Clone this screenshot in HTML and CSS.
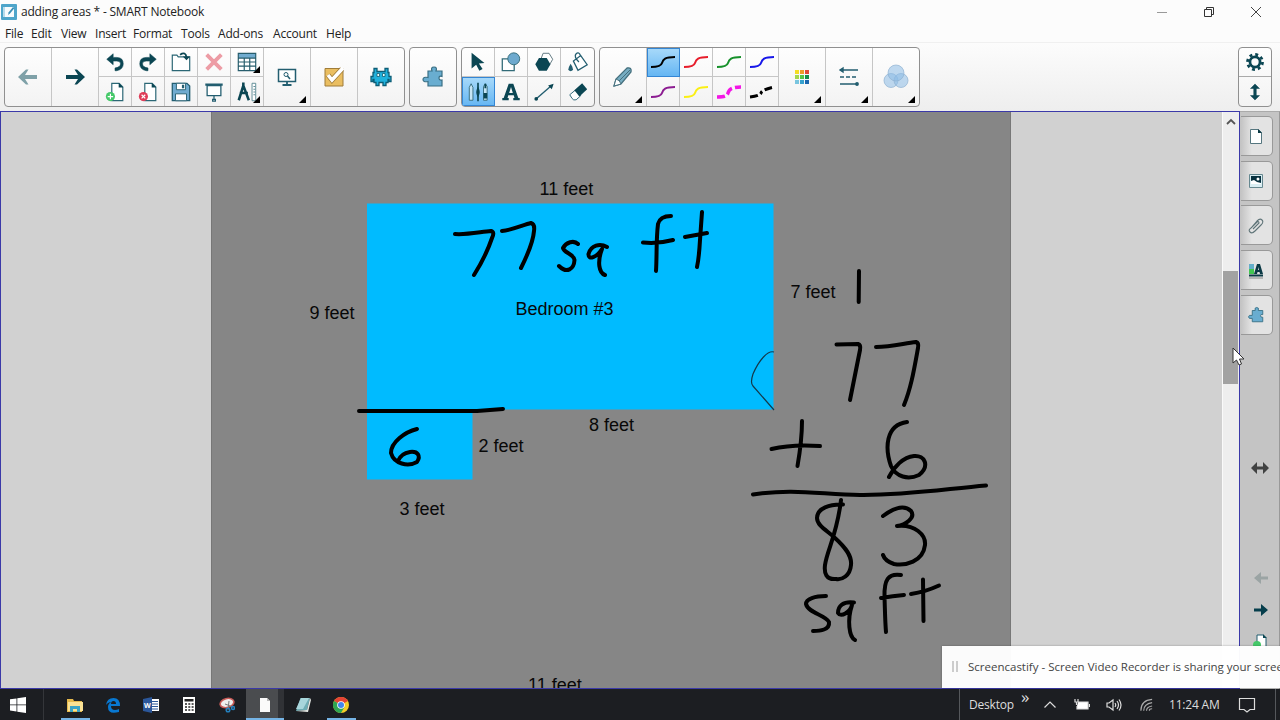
FILE: index.html
```html
<!DOCTYPE html>
<html lang="en">
<head>
<meta charset="utf-8">
<title>adding areas * - SMART Notebook</title>
<link rel="stylesheet" href="styles.css">
</head>
<body>
<div class="screen">
  <header class="titlebar">
    <svg class="app-icon" viewBox="0 0 16 16"><rect width="16" height="16" rx="1" fill="#4ea5ca"/><path d="M3 3h10v10H3z" fill="#f7fbfd"/><path d="M3 3v10" stroke="#b7dbea" stroke-width="2"/><path d="M7 11l.7-2.7L12 3l1.500 1-4.500 5.600z" fill="#3c8fb5"/></svg>
    <span class="title">adding areas * - SMART Notebook</span>
    <div class="window-controls">
      <svg viewBox="0 0 12 12"><path d="M1 6.500h10" stroke="#999"/></svg>
      <svg viewBox="0 0 12 12" fill="none" stroke="#333"><path d="M1.500 3.500h7v7h-7zM3.500 3.500v-2h7v7h-2"/></svg>
      <svg viewBox="0 0 12 12" stroke="#444"><path d="M1 1l10 10M11 1L1 11"/></svg>
    </div>
  </header>
  <nav class="menubar"><span>File</span><span>Edit</span><span>View</span><span>Insert</span><span>Format</span><span>Tools</span><span>Add-ons</span><span>Account</span><span>Help</span></nav>

  <div class="toolbar">
    <div class="group">
      <div class="cell big"><svg viewBox="0 0 24 24"><path d="M2 12l8-7.500h2.500L9 10.100h12v3.800H9l3.500 5.600H10z" fill="#7fa1a8"/></svg></div>
      <div class="cell big"><svg viewBox="0 0 24 24"><path d="M22 12l-8-7.500h-2.500l3.500 5.600H3v3.800h12l-3.500 5.600H14z" fill="#0b4653"/></svg></div>
      <div class="grid five">
        <div class="cell"><svg viewBox="0 0 24 24"><path d="M3 9l7-6v4h4q7 0 7 7 0 6-7 7.500h-2v-3q6-.8 6-4.500 0-3-4-3h-4v4z" fill="#0b4653" stroke="#0b4653" stroke-width=".6"/></svg></div>
        <div class="cell"><svg viewBox="0 0 24 24"><path d="M21 9l-7-6v4h-4q-7 0-7 7 0 6 7 7.500h2v-3q-6-.8-6-4.500 0-3 4-3h4v4z" fill="#0b4653" stroke="#0b4653" stroke-width=".6"/></svg></div>
        <div class="cell"><svg viewBox="0 0 24 24" fill="none" stroke="#2b6775"><path d="M2.500 4.500h5l1.500 2h12.500v15h-19z" fill="#fff" stroke-width="1.300"/><path d="M11 4q6-4 7 3" stroke="#0b4653" stroke-width="2"/><path d="M14 6h8l-4 4z" fill="#0b4653" stroke="none"/></svg></div>
        <div class="cell"><svg viewBox="0 0 24 24"><path d="M4 4l16 16M20 4L4 20" stroke="#ed9ca5" stroke-width="4.200"/></svg></div>
        <div class="cell corner"><svg viewBox="0 0 24 24"><path d="M2.500 2.500h19v19h-19z" fill="#fff"/><path d="M2.500 2.500h19v5h-19z" fill="#71acd0"/><path d="M2.500 2.500h19v19h-19zM2 7.800h20M2 12h20M2 16.500h20M9 8v13.500M15 8v13.500" fill="none" stroke="#285e6d" stroke-width="1.300"/></svg></div>
        <div class="cell"><svg viewBox="0 0 24 24"><path d="M8.500 2.500h8l4 4v15h-12z" fill="#fff" stroke="#2b6775" stroke-width="1.300"/><path d="M16 2v5h5z" fill="#0b4653"/><circle cx="7" cy="17" r="5" fill="#45c969"/><path d="M4 17h6M7 14v6" stroke="#fff" stroke-width="1.300"/></svg></div>
        <div class="cell"><svg viewBox="0 0 24 24"><path d="M8.500 2.500h8l4 4v15h-12z" fill="#fff" stroke="#2b6775" stroke-width="1.300"/><path d="M16 2v5h5z" fill="#0b4653"/><circle cx="7" cy="17" r="5" fill="#df3d58"/><path d="M5 15l4 4M9 15l-4 4" stroke="#fff" stroke-width="1.300"/></svg></div>
        <div class="cell"><svg viewBox="0 0 24 24"><path d="M2.500 2.500h16l3 3v16h-19z" fill="#71acd0" stroke="#235e70" stroke-width="1.400"/><path d="M7 2.500h10v7H7zM6 14h12v7.500H6z" fill="#fff" stroke="#235e70"/><path d="M13 4h2.500v4H13z" fill="#235e70"/></svg></div>
        <div class="cell"><svg viewBox="0 0 24 24" stroke="#235e70" fill="#fff" stroke-width="1.400"><path d="M4.500 5h15v11h-15zM12 16v5"/><path d="M2.500 4h19" stroke-width="2.500"/><path d="M10.500 20h3v2h-3z"/></svg></div>
        <div class="cell corner"><svg viewBox="0 0 24 24"><path d="M8 1.500v4M8 5L3 21M8 5l6 16M4 13h9" fill="none" stroke="#0b4653" stroke-width="2.800"/><path d="M17.500 2.500h4v19h-4zM19 6h2M19 9h2M19 12h2M19 15h2" fill="#fff" stroke="#588791"/></svg></div>
      </div>
      <div class="cell big corner"><svg viewBox="0 0 24 24"><path d="M3.500 4.500h17v12h-17z" fill="#fff" stroke="#235e70" stroke-width="1.500"/><path d="M12 16v4M7.500 20h9" stroke="#235e70" stroke-width="1.800"/><circle cx="11" cy="9.500" r="2" fill="none" stroke="#235e70"/><path d="M12.500 11l2.500 3" stroke="#235e70" stroke-width="1.500"/></svg></div>
      <div class="cell big"><svg viewBox="0 0 24 24"><path d="M3 3.500h18V21H3z" fill="#eabe61" stroke="#a07d3a"/><path d="M6 10l4 5L20 4" fill="none" stroke="#a07d3a" stroke-width="5.200"/><path d="M6 10l4 5L21 3" fill="none" stroke="#fff" stroke-width="3.600"/></svg></div>
      <div class="cell big"><svg viewBox="0 0 24 24"><path d="M5 3.500h3v3h8v-3h3v4h1v4h2v5h-2v-2h-1v3h-2v3h-3v-3h-4v3H7v-3H5v-3H4v2H2v-5h2v-4h1z" fill="#20b1dc" stroke="#0d5d76" stroke-width="1.300"/><path d="M8 8.500h2.500v3H8zM13.500 8.500H16v3h-2.500z" fill="#e8ffff" stroke="#175c70" stroke-width=".8"/></svg></div>
    </div>
    <div class="group"><div class="cell big"><svg viewBox="0 0 24 24"><path class="puzzle" d="M7 6h4q-1.500-4 2-4t2 4H21v5.500q-3-1-3 1.500t3 2V21H7v-4.500q-5 1-5-2t5-2z"/></svg></div></div>
    <div class="group">
      <div class="grid four">
        <div class="cell"><svg viewBox="0 0 24 24"><path d="M5 2l14 11-6 .5 4 6-3.500 2-3.500-6.500-5 4z" fill="#0b4653"/></svg></div>
        <div class="cell"><svg viewBox="0 0 24 24" stroke="#326b78"><path d="M2.500 8.500h13v13h-13z" fill="#fff" stroke-width="1.400"/><circle cx="15" cy="8.500" r="6.500" fill="#6da9ce"/></svg></div>
        <div class="cell"><svg viewBox="0 0 24 24"><path d="M11 2.500h6.500l4 6.500-4 7-10-4z" fill="#fff" stroke="#58717a"/><path d="M6.500 7.500h8.500l4 7-4 7H6.500l-4-7z" fill="#0b4653"/></svg></div>
        <div class="cell"><svg viewBox="0 0 24 24"><path d="M7 11l8-6 7 10-10 6zM15 6q-2-6-5-3t3 9" fill="#fff" stroke="#235e70" stroke-width="1.400"/><path d="M4 14q-5 8 0 8t0-8" fill="#235e70"/></svg></div>
        <div class="cell selected"><svg viewBox="0 0 24 24"><path d="M2.500 7l2-4 2 4v14h-4zM18 6l2-3 2 3v15h-4z" fill="#c6e5f5" stroke="#35697a"/><path d="M12 2v20" stroke="#0b4653" stroke-width="1.800"/><path d="M12 6c-3 6-2 8 0 12 2-4 3-6 0-12zM18 13h4v6h-4zM19 3h2v5h-2z" fill="#0b4653"/></svg></div>
        <div class="cell"><svg viewBox="0 0 24 24"><path d="M2.500 21v-2.500H4L9.500 3h5L20 18.500h1.500V21h-7v-2.500h1.300l-.8-3H9l-.8 3h1.300V21zM10 13h4l-2-6.500z" fill="#0b4653" fill-rule="evenodd"/></svg></div>
        <div class="cell"><svg viewBox="0 0 24 24"><path d="M3 20L19 6" stroke="#235e70" stroke-width="1.500"/><path d="M22.500 3l-2 6-4-4z" fill="#0b4653"/><circle cx="3.500" cy="19.500" r="2" fill="#0b4653"/></svg></div>
        <div class="cell"><svg viewBox="0 0 24 24"><path d="M3 15l6-5 6 6-5 4.500q-3 1-4.500-1.500z" fill="#fff" stroke="#235e70"/><path d="M8 10l8.500-7.500L22 9l-8.500 8z" fill="#0b4653"/></svg></div>
      </div>
    </div>
    <div class="group">
      <div class="cell big corner"><svg viewBox="0 0 24 24"><path d="M3 21l2-7L16 3q5-1 4 4L10 19z" fill="#77adc2" stroke="#45707e" stroke-width="1.300"/><path d="M3 21l2-7q4 1 5 5z" fill="#fff" stroke="#45707e"/><path d="M8 16L19 5" stroke="#466f7d"/></svg></div>
      <div class="grid four pens">
        <div class="cell selected"><svg viewBox="0 0 26 14"><path stroke="#000" d="M1 12c6 0 10-.5 11-4s3-6 13-6"/></svg></div>
        <div class="cell"><svg viewBox="0 0 26 14"><path stroke="#e71d2b" d="M1 12c6 0 10-.5 11-4s3-6 13-6"/></svg></div>
        <div class="cell"><svg viewBox="0 0 26 14"><path stroke="#17912b" d="M1 12c6 0 10-.5 11-4s3-6 13-6"/></svg></div>
        <div class="cell"><svg viewBox="0 0 26 14"><path stroke="#1717e9" d="M1 12c6 0 10-.5 11-4s3-6 13-6"/></svg></div>
        <div class="cell"><svg viewBox="0 0 26 14"><path stroke="#8c1c91" d="M1 12c6 0 10-.5 11-4s3-6 13-6"/></svg></div>
        <div class="cell"><svg viewBox="0 0 26 14"><path stroke="#faef14" d="M1 12c6 0 10-.5 11-4s3-6 13-6"/></svg></div>
        <div class="cell"><svg viewBox="0 0 26 14"><path stroke="#f316e5" class="dash" d="M1 12c6 0 10-.5 11-4s3-6 13-6"/></svg></div>
        <div class="cell"><svg viewBox="0 0 26 14"><path stroke="#000" class="dashdot" d="M1 12q10-1 11-4t11-5.500"/></svg></div>
      </div>
      <div class="cell big corner"><svg viewBox="0 0 24 24"><path d="M5 5h4v4H5z" fill="#f5dd24"/><path d="M10 5h4v4h-4z" fill="#ef9d28"/><path d="M15 5h4v4h-4z" fill="#df4b3a"/><path d="M5 10h4v4H5z" fill="#a4d84d"/><path d="M10 10h4v4h-4z" fill="#56c747"/><path d="M15 10h4v4h-4z" fill="#148c4b"/><path d="M5 15h4v4H5z" fill="#79c5df"/><path d="M10 15h4v4h-4z" fill="#36a1ce"/><path d="M15 15h4v4h-4z" fill="#1b66ae"/></svg></div>
      <div class="cell big corner"><svg viewBox="0 0 24 24" stroke="#235e70" stroke-width="1.400"><path d="M3 5h18M3 19h17"/><path d="M3 12h18" stroke-dasharray="4 2"/><path d="M6 3v4L3 5z" fill="#235e70"/><circle cx="20" cy="19" r="1.200" fill="#235e70"/></svg></div>
      <div class="cell big corner"><svg class="venn" viewBox="0 0 26 26" fill="#8dbbe6" fill-opacity=".55" stroke="#8fb1d1" stroke-width=".7"><circle cx="8" cy="16.500" r="7"/><circle cx="18" cy="16.500" r="7"/><circle cx="13" cy="9" r="8"/></svg></div>
    </div>
    <div class="group settings">
      <div class="cell"><svg viewBox="0 0 24 24"><g fill="none" stroke="#0b4653"><circle cx="12" cy="12" r="5.500" stroke-width="3"/><circle cx="12" cy="12" r="8.200" stroke-width="3" stroke-dasharray="3.200 3.240"/></g></svg></div>
      <div class="cell"><svg viewBox="0 0 24 24"><path d="M12 3l5.500 5.500h-3.800v7h3.800L12 21l-5.500-5.500h3.800v-7H6.500z" fill="#0b4653"/></svg></div>
    </div>
  </div>

  <main class="workspace">
    <div class="document">
      <svg class="page" viewBox="211 112 800 576">
        <path class="room" d="M367 203.500h406.500V409.500H472.500v70H367z"/>
        <g class="labels">
          <text x="539.500" y="194.500">11 feet</text><text x="309.500" y="318.500">9 feet</text>
          <text x="790.500" y="298">7 feet</text><text x="515.500" y="314.500">Bedroom #3</text>
          <text x="589" y="430.500">8 feet</text><text x="478.500" y="452">2 feet</text>
          <text x="399.500" y="514.500">3 feet</text><text x="528" y="690.500">11 feet</text>
        </g>
        <path class="door" d="M774 352C768 350 759 360 753 374Q750 383 753 386L774 410"/>
        <g class="ink">
          <path d="M455 234C466 235 480 232 491 231Q495 232 492 238Q486 256 474 275M502 231C512 230 523 225 531 223Q535 224 534 231C533 244 526 258 521 268"/>
          <path d="M578 244C574 240 566 242 563 248C564 253 574 254 574.500 260C574 269 567 274 559 266M607 247C600 243 591 245 588.500 254C588 261 597 257 602 249C597 262 599 273 605 275"/>
          <path d="M671 216Q660 216 658 224C656 240 657 255 656 271M643 242.500Q658 244 673 240M702 212L700 240Q699 258 697 267M685 237L707 233"/>
          <path d="M859 271L858.700 302M836.500 344.500L858 344Q861 345 860 350L850 400M876 347C892 347 905 343 916 342Q919 343 918 348C914 370 911 388 904 405M771.500 449Q792 444 820 446M802 421Q802 440 797.500 466"/>
          <path d="M907 422C885 425 885 449 891 466C896 477 908 480 919 475C930 466 925 455 914 456C903 457 894 467 889 477M753 494.500C795 488 824 495 860 495C905 495.500 945 489 986 485.500"/>
          <path d="M843 504.500C830 504 817 508 817 518C817 526 828 531 835 538C846 548 852 556 851 565C850 576 842 580 836 579C826 580 824 573 825 565C827 550 837 535 841 500M883 516C895 507 905 505 911 511C916 518 905 525 897 526C915 524 926 535 925 545C923 562 905 566 894 564C888 562 884 558 883 555"/>
          <path d="M826 596C815 596 806 599 806 604C808 613 826 615 829 622C830 630 820 631 813 631M854 602.500C843 601 838 606 838 613C841 618 850 612 852 605C847 620 849 637 855 640M901 575C888 573 884 580 884.500 597C885 610 885 620 886 632M881 598Q893 596 904 595M923 579.500L923.500 621M911 594Q925 592 939 585.500"/>
          <path d="M359 411L477 411L503 409M417 429C405 432 391 442 391 453C394 464 408 467 417 462C421 456 418 451 410 452C404 453 400 456 398 461"/>
        </g>
      </svg>
    </div>
    <div class="scrollbar"><svg viewBox="0 0 10 10"><path d="M1 7l4-4 4 4" fill="none" stroke="#555" stroke-width="1.800"/></svg><div class="thumb"></div></div>
    <aside class="sidebar">
      <div class="tabs">
        <div class="tab"><svg viewBox="0 0 18 18"><path d="M3.500 2.500h8l3 3v11h-11z" fill="#fff" stroke="#55767f"/><path d="M11 2v4h4z" fill="#0b3945"/></svg></div>
        <div class="tab"><svg viewBox="0 0 18 18"><path d="M2.500 2.500h13v13h-13z" fill="#d9edf2" stroke="#668890"/><path d="M4 4h10v8H4z" fill="#07313f"/><path d="M4 9l3-1 3 2 4 1v1H4z" fill="#fff"/><circle cx="11" cy="7" r="1.500" fill="#fff"/></svg></div>
        <div class="tab"><svg viewBox="0 0 18 18"><path d="M4 12l6-7q3-3 5-1t-1 5l-6 6q-3 3-5 1t1-4l6-6q2-1 2 1l-6 6" fill="none" stroke="#607579" stroke-width="1.100"/></svg></div>
        <div class="tab"><svg viewBox="0 0 18 18"><path d="M2 3h5v5H2z" fill="#64aeca"/><path d="M2 8h5v5H2z" fill="#43c652"/><path d="M7 13l3-10h3l3 10h-3l-.5-2h-2l-.5 2zM11 9h1l-.5-3z" fill="#0b3945" fill-rule="evenodd"/><path d="M2 14.500h14" stroke="#0b3945" stroke-width="2"/><path d="M2 17h14" stroke="#888"/></svg></div>
        <div class="tab"><svg viewBox="0 0 24 24"><path class="puzzle" d="M7 6h4q-1.500-4 2-4t2 4H21v5.500q-3-1-3 1.500t3 2V21H7v-4.500q-5 1-5-2t5-2z"/></svg></div>
      </div>
      <div class="resize"><svg viewBox="0 0 20 14"><path d="M1 7l6-6v4.500h6V1l6 6-6 6V8.500H7V13z" fill="#414242"/></svg></div>
      <div class="page-nav">
        <svg viewBox="0 0 16 16"><path d="M1 8l7-6v4.500h7v3H8V14z" fill="#9ba4a4"/></svg>
        <svg viewBox="0 0 16 16"><path d="M15 8L8 2v4.500H1v3h7V14z" fill="#063e4c"/></svg>
        <svg viewBox="0 0 16 16"><path d="M4 1h6l3 3v11H4z" fill="#fff" stroke="#235e70"/><path d="M10 0v4h4z" fill="#0b4653"/><circle cx="4" cy="11" r="4" fill="#45c969"/></svg>
      </div>
    </aside>
  </main>

  <footer class="taskbar">
    <div class="apps">
      <div class="start"><svg viewBox="0 0 16 16" fill="#fff"><path d="M0 2.300l6.500-.9v6.100H0zM7.300 1.300L16 0v7.500H7.300zM0 8.300h6.500v6.100L0 13.500zM7.300 8.300H16V16l-8.700-1.300z"/></svg></div>
      <div class="app running"><svg viewBox="0 0 16 16"><path d="M0 2h6l1 2h8v11H0z" fill="#e5b94d"/><path d="M1 5h15v9H1z" fill="#fbe294"/><path d="M3 9h10v6h-3v-3H6v3H3z" fill="#3ba4c5"/></svg></div>
      <div class="app"><svg viewBox="0 0 16 16"><path d="M1 8Q2 1 8.500 1 15 1 15 9H6q0 4 4 4 2 0 4-1v3q-11 3-11-5 0-4 4-5-4 0-6 3zM6 7h5q0-3-2.500-3T6 7z" fill="#0878d2" fill-rule="evenodd"/></svg></div>
      <div class="app"><svg viewBox="0 0 16 16"><path d="M8 2h8v12H8z" fill="#fff"/><path d="M9 4.500h6M9 7h6M9 9.500h6M9 12h6" stroke="#2b579a"/><path d="M0 2l9-2v16l-9-2z" fill="#2b579a"/><text x="1" y="11" class="word-letter">W</text></svg></div>
      <div class="app"><svg viewBox="0 0 16 16"><path d="M2 0h12v16H2z" fill="#fff"/><path d="M3.500 2h9v2.500h-9z" fill="#222"/><path d="M4 7h9M4 10h9M4 13h9" stroke="#222" stroke-width="1.700" stroke-dasharray="2 1.300"/></svg></div>
      <div class="app"><svg viewBox="0 0 16 16"><ellipse cx="8" cy="6" rx="7" ry="4.500" transform="rotate(-15 8 6)" fill="#eee" stroke="#c85b58" stroke-width="1.600"/><path d="M6 7l8 3M10 4l-1 9" stroke="#777"/><circle cx="9" cy="13" r="1.800" fill="none" stroke="#2480be" stroke-width="1.500"/><circle cx="14" cy="11" r="1.500" fill="none" stroke="#2480be" stroke-width="1.500"/></svg></div>
      <div class="app active"><svg viewBox="0 0 16 16"><path d="M3 1h7l3 3v11H3z" fill="#fafafa"/><path d="M10 1v3h3z" fill="#bbb"/></svg></div>
      <div class="app"><svg viewBox="0 0 16 16"><path d="M5.500 1h9.500l-3 12-11 1z" fill="#6fadb5"/><path d="M6 1h8l-6 11H1z" fill="#a8d6dc"/><path d="M1 14l11-1 3-12 1 2-3 12z" fill="#e5e9e5"/></svg></div>
      <div class="app running"><svg viewBox="0 0 16 16"><circle cx="8" cy="8" r="8" fill="#f5cd28"/><path d="M8 8L1.070 4A8 8 0 0 1 14.930 4z" fill="#e54335"/><path d="M8 8L1.070 4A8 8 0 0 0 8 16l3.500-6z" fill="#2fa653"/><circle cx="8" cy="8" r="3.800" fill="#fff"/><circle cx="8" cy="8" r="3" fill="#4286ed"/></svg></div>
    </div>
    <div class="tray">
      <span class="desktop">Desktop</span><span class="more">»</span>
      <svg class="chev" viewBox="0 0 16 16"><path d="M2.500 10.500L8 5l5.500 5.500"/></svg>
      <svg class="battery" viewBox="0 0 16 16"><path d="M4 5h10v7H3V9" fill="#fff"/><path d="M15.500 7v3M1 2v3h3V2M2.500 5v3"/></svg>
      <svg class="speaker" viewBox="0 0 16 16"><path d="M1 6h2l4-3v10L3 10H1zM9 6q1.500 2 0 4M11 4q3 4 0 8M13 2.500q4 5.500 0 11"/></svg>
      <svg class="wifi" viewBox="0 0 16 16"><path d="M2 14Q2 3 14 2M5 14q0-7 9-8.500M8 14q0-4 6-5M11 14q0-2 3-2" stroke="#aaa"/></svg>
      <span class="clock">11:24 AM</span>
      <svg class="notice" viewBox="0 0 18 16"><path d="M1.500 1.500h15v11H12L9 15l-3-2.500H1.500z"/></svg>
      <i class="show-desktop"></i>
    </div>
  </footer>

  <div class="share-banner"><i class="grip"></i><span>Screencastify - Screen Video Recorder is sharing your screen</span></div>
  <svg class="pointer" viewBox="0 0 14 20"><path d="M1 1v15l3.500-3 2.500 5 2.500-1-2-5H12z" fill="#fff" stroke="#333"/></svg>
</div>
</body>
</html>
```
FILE: styles.css
```css
* { box-sizing: border-box; }
body { margin: 0; font-family: "Open Sans", "Noto Sans", sans-serif; color: #222; }
svg { display: block; flex: none; }
.screen { position: relative; display: flex; flex-direction: column; width: 1280px; height: 720px; overflow: hidden; background: #fcfcfc; }

.titlebar { height: 24px; flex: none; display: flex; align-items: center; padding: 0 18px 1px 1px; }
.app-icon { width: 16px; height: 16px; }
.title { margin-left: 4px; font-size: 12px; letter-spacing: -.2px; white-space: nowrap; }
.window-controls { margin-left: auto; display: flex; gap: 35px; }
.window-controls svg { width: 12px; height: 12px; }
.menubar { height: 19px; flex: none; padding-left: 5px; display: grid; grid-template-columns: 26px 30px 34px 38px 48px 37px 55px 53px 40px; font-size: 12px; line-height: 19px; letter-spacing: -.2px; white-space: nowrap; border-bottom: 1px solid #f0f0f0; }

.toolbar { height: 68px; flex: none; display: flex; align-items: flex-start; gap: 4px; padding: 4px 8px 0 4px; background: linear-gradient(#fcfcfc, #eee); }
.group { height: 60px; display: flex; flex: none; border: 1px solid #909090; border-radius: 4px; overflow: hidden; background: linear-gradient(#fefefe, #f3f3f3); }
.grid { display: grid; grid-template-rows: 29px 29px; }
.five { grid-template-columns: repeat(5, 33px); }
.four { grid-template-columns: repeat(4, 33px); }
.cell { position: relative; display: flex; align-items: center; justify-content: center; border-right: 1px solid #c6c6c6; }
.cell svg { width: 22px; height: 22px; }
.big { width: 47px; }
.big svg { width: 24px; height: 24px; }
.grid .cell { border-bottom: 1px solid #c6c6c6; }
.grid .cell:nth-last-child(-n+4), .five .cell:nth-last-child(-n+5) { border-bottom: 0; }
.group > .cell:last-child, .group > .grid:last-child .cell:nth-child(4n) { border-right: 0; }
.group > .cell:last-child { width: 46px; }
.corner::after { content: ""; position: absolute; right: 4px; bottom: 3px; border-left: 7px solid transparent; border-bottom: 7px solid #000; }
.grid .corner::after { right: 3px; bottom: 3px; }
.selected { background: linear-gradient(#a9dafa, #65b6f3); outline: 1px solid #3486d4; outline-offset: -1px; }
.pens .cell svg { width: 26px; height: 14px; fill: none; stroke-width: 2; }
.dash { stroke-width: 3.500; stroke-dasharray: 8 3; }
.dashdot { stroke-width: 3; stroke-dasharray: 8 3 3 3; }
.cell .venn { width: 26px; height: 26px; }
.puzzle { fill: #69add0; stroke: #396f84; stroke-width: 1.200; }
.settings { width: 34px; margin-left: auto; flex-direction: column; }
.settings .cell, .settings > .cell:last-child { width: 32px; height: 29px; border-right: 0; }
.settings .cell:first-child { border-bottom: 1px solid #aaa; }

.workspace { height: 578px; flex: none; display: flex; background: #c4c4c4; }
.document { width: 1222px; padding: 0 0 0 210px; border: 1px solid #3b39a8; border-right: 0; background: #d1d1d1; }
.page { width: 800px; height: 576px; background: #868686; box-shadow: inset 1px 0 #777, inset -1px 0 #777; }
.room { fill: #00bbff; }
.labels { font: 18px "Liberation Sans", Arial, sans-serif; fill: #080808; }
.door { fill: none; stroke: #14384a; stroke-width: 1.200; }
.ink { fill: none; stroke: #000; stroke-width: 4; stroke-linecap: round; stroke-linejoin: round; }
.scrollbar { width: 18px; background: #eee; border: solid #3b39a8; border-width: 1px 1px 1px 0; box-shadow: inset 1px 0 #fafafa; }
.scrollbar svg { width: 10px; height: 10px; margin: 5px 0 0 4px; }
.thumb { height: 113px; margin: 144px 1px 0 1px; background: #a2a2a2; }
.sidebar { width: 40px; padding: 4px 0 0 1px; border-top: 1px solid #aaa; border-right: 1px solid #999; overflow: hidden; }
.tabs { display: flex; flex-direction: column; gap: 4.700px; }
.tab { width: 32px; height: 40px; display: flex; align-items: center; justify-content: center; padding-right: 2px; border: 1px solid #999; border-left: 0; border-radius: 0 5px 5px 0; background: linear-gradient(90deg, #c4c4c4, #e3e3e3 35%); }
.tab svg { width: 18px; height: 18px; }
.resize { margin: 126px 0 0 9px; }
.resize svg { width: 20px; height: 14px; }
.page-nav { display: flex; flex-direction: column; gap: 16px; margin: 95px 0 0 12px; }
.page-nav svg { width: 16px; height: 16px; }

.taskbar { height: 31px; flex: none; display: flex; justify-content: space-between; background: #1c1e22; color: #ddd; }
.apps { display: flex; }
.start { width: 44px; margin-right: 12px; padding: 8px 0 0 10px; border-right: 1px solid #34363a; }
.start svg, .app svg { width: 16px; height: 16px; }
.app { position: relative; width: 38px; display: flex; align-items: center; justify-content: center; }
.running::after { content: ""; position: absolute; left: 5px; bottom: 0; width: 29px; height: 2px; background: #75b4e6; }
.active { background: linear-gradient(90deg, #4a4c4f 32px, #303236 32px); border-bottom: 2px solid #75b4e6; padding-top: 2px; }
.word-letter { font: bold 7px "Open Sans", sans-serif; fill: #fff; }
.tray { width: 321px; display: flex; align-items: center; border-left: 1px solid #55585c; padding-left: 9px; font-size: 12px; }
.tray svg { width: 16px; height: 16px; fill: none; stroke: #ddd; stroke-width: 1.200; }
.desktop { width: 51px; white-space: nowrap; letter-spacing: -.2px; }
.more { width: 22px; padding-left: 1px; font-size: 17px; line-height: 17px; margin-top: -16px; }
.tray .battery { margin-left: 16px; }
.tray .speaker { margin-left: 16px; }
.tray .wifi { margin-left: 17px; width: 15px; }
.clock { width: 69px; margin-left: 15px; white-space: nowrap; letter-spacing: -.2px; }
.tray .notice { width: 18px; }
.show-desktop { width: 5px; height: 31px; margin-left: auto; border-left: 1px solid #55585c; }

.share-banner { position: absolute; left: 942px; top: 646px; width: 338px; height: 42px; padding-bottom: 2px; display: flex; align-items: center; background: rgba(255,255,255,.97); box-shadow: 0 0 2px rgba(0,0,0,.3); font-size: 11.500px; white-space: nowrap; overflow: hidden; color: #444; }
.grip { flex: none; width: 6px; height: 11px; margin: 0 10px; border: solid #ccc; border-width: 0 2px; }
.pointer { position: absolute; left: 1232px; top: 347px; width: 14px; height: 20px; }
```
